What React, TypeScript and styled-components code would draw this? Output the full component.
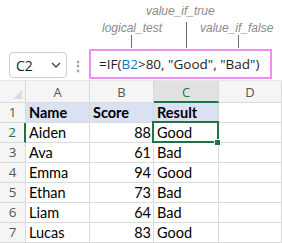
import React from 'react';
import styled, { createGlobalStyle } from 'styled-components';

const GlobalStyle = createGlobalStyle`
  html, body {
    margin: 0;
    padding: 0;
    background: #ffffff;
  }
`;

const Page = styled.div`
  width: 282px;
  height: 243px;
  overflow: hidden;
  background: #ffffff;
  font-family: Lato, 'Liberation Sans', sans-serif;
`;

const Callouts = styled.div`
  position: relative;
  height: 48px;
`;

const Label = styled.span<{ $x: number; $y: number }>`
  position: absolute;
  left: ${p => p.$x}px;
  top: ${p => p.$y}px;
  font-family: 'Liberation Sans', Arial, sans-serif;
  font-style: italic;
  font-size: 12px;
  line-height: 14px;
  color: #8a8a8a;
  white-space: nowrap;
`;

const Tick = styled.span<{ $x: number; $top: number }>`
  position: absolute;
  left: ${p => p.$x}px;
  top: ${p => p.$top}px;
  bottom: 0;
  width: 1px;
  background: #6e6e6e;
`;

const FormulaBar = styled.div`
  display: flex;
  align-items: center;
  height: 32px;
  padding-left: 9px;
  border-bottom: 1px solid #e6e6e6;
`;

const NameBox = styled.div`
  box-sizing: border-box;
  width: 58px;
  height: 26px;
  margin-top: 2px;
  border: 1px solid #cfcfcf;
  border-radius: 4px;
  display: flex;
  align-items: center;
  justify-content: space-between;
  padding: 0 5px 0 6px;
  font-family: 'Open Sans', 'Noto Sans', sans-serif;
  font-size: 14px;
  color: #222;
`;

const Dots = styled.span`
  width: 22px;
  text-align: center;
  color: #9a9a9a;
  font-size: 14px;
  font-weight: bold;
  margin-top: 2px;
`;

const FormulaBox = styled.div`
  box-sizing: border-box;
  width: 183px;
  height: 30px;
  border: 2px solid #f28bf2;
  padding-left: 8px;
  display: flex;
  align-items: center;
  font-family: 'Open Sans', 'Noto Sans', sans-serif;
  font-size: 13.5px;
  color: #1e1e1e;
  white-space: nowrap;
`;

const Ref = styled.span`
  color: #1b6fc8;
`;

const Sheet = styled.div`
  display: grid;
  grid-template-columns: 26px 64px 64px 65px 1fr;
  grid-template-rows: 22px repeat(7, 20px);
`;

const Cell = styled.div<{ $align?: 'left' | 'right'; $bold?: boolean; $head?: boolean }>`
  position: relative;
  box-sizing: border-box;
  border-right: 1px solid #dadada;
  border-bottom: 1px solid #dadada;
  padding: 0 2px 0 3px;
  font-size: 14.5px;
  line-height: 19px;
  color: #000;
  text-align: ${p => p.$align ?? 'left'};
  font-weight: ${p => (p.$bold ? 700 : 400)};
  background: ${p => (p.$head ? '#d9e1f2' : '#ffffff')};
  white-space: nowrap;
`;

const Corner = styled.div`
  position: relative;
  box-sizing: border-box;
  border-right: 1px solid #dadada;
  border-bottom: 1px solid #dadada;
  background: #f5f5f5;

  &::after {
    content: '';
    position: absolute;
    right: 3px;
    bottom: 3px;
    border-left: 9px solid transparent;
    border-bottom: 9px solid #dcdcdc;
  }
`;

const ColHead = styled.div<{ $active?: boolean }>`
  box-sizing: border-box;
  border-right: 1px solid #dadada;
  border-bottom: ${p => (p.$active ? '2px solid #217346' : '1px solid #dadada')};
  background: ${p => (p.$active ? '#e1e1e1' : '#f5f5f5')};
  color: ${p => (p.$active ? '#217346' : '#555')};
  text-align: center;
  font-family: 'Open Sans', 'Noto Sans', sans-serif;
  font-size: 13px;
  line-height: 22px;
`;

const RowHead = styled.div<{ $active?: boolean }>`
  box-sizing: border-box;
  border-right: ${p => (p.$active ? '2px solid #217346' : '1px solid #dadada')};
  border-bottom: 1px solid #dadada;
  background: #f5f5f5;
  color: ${p => (p.$active ? '#217346' : '#555')};
  text-align: center;
  font-family: 'Open Sans', 'Noto Sans', sans-serif;
  font-size: 13.5px;
  line-height: 19px;
`;

const Selected = styled(Cell)`
  &::after {
    content: '';
    position: absolute;
    left: -2px;
    top: -2px;
    right: -1px;
    bottom: -1px;
    border: 2px solid #217346;
    pointer-events: none;
  }

  &::before {
    content: '';
    position: absolute;
    right: -3px;
    bottom: -4px;
    width: 5px;
    height: 5px;
    background: #217346;
    border: 1px solid #fff;
    z-index: 2;
  }
`;

const rows = [
  ['Aiden', 88, 'Good'],
  ['Ava', 61, 'Bad'],
  ['Emma', 94, 'Good'],
  ['Ethan', 73, 'Bad'],
  ['Liam', 64, 'Bad'],
  ['Lucas', 83, 'Good'],
] as const;

const Chevron = () => (
  <svg width="10" height="6" viewBox="0 0 10 6">
    <path d="M1 1l4 4 4-4" fill="none" stroke="#444" strokeWidth="1.3" />
  </svg>
);

const App: React.FC = () => {
  return (
    <Page>
      <GlobalStyle />
      <Callouts>
        <Label $x={146} $y={4}>value_if_true</Label>
        <Label $x={102} $y={21}>logical_test</Label>
        <Label $x={200} $y={21}>value_if_false</Label>
        <Tick $x={131} $top={35} />
        <Tick $x={186} $top={22} />
        <Tick $x={238} $top={35} />
      </Callouts>

      <FormulaBar>
        <NameBox>
          C2
          <Chevron />
        </NameBox>
        <Dots>⋮</Dots>
        <FormulaBox>
          =IF(<Ref>B2</Ref>&gt;80, "Good", "Bad")
        </FormulaBox>
      </FormulaBar>

      <Sheet>
        <Corner />
        <ColHead>A</ColHead>
        <ColHead>B</ColHead>
        <ColHead $active>C</ColHead>
        <ColHead>D</ColHead>

        <RowHead>1</RowHead>
        <Cell $head $bold>Name</Cell>
        <Cell $head $bold>Score</Cell>
        <Cell $head $bold>Result</Cell>
        <Cell />

        {rows.map(([name, score, result], i) => (
          <React.Fragment key={name}>
            <RowHead $active={i === 0}>{i + 2}</RowHead>
            <Cell>{name}</Cell>
            <Cell $align="right">{score}</Cell>
            {i === 0 ? <Selected>{result}</Selected> : <Cell>{result}</Cell>}
            <Cell />
          </React.Fragment>
        ))}
      </Sheet>
    </Page>
  );
};

export default App;
